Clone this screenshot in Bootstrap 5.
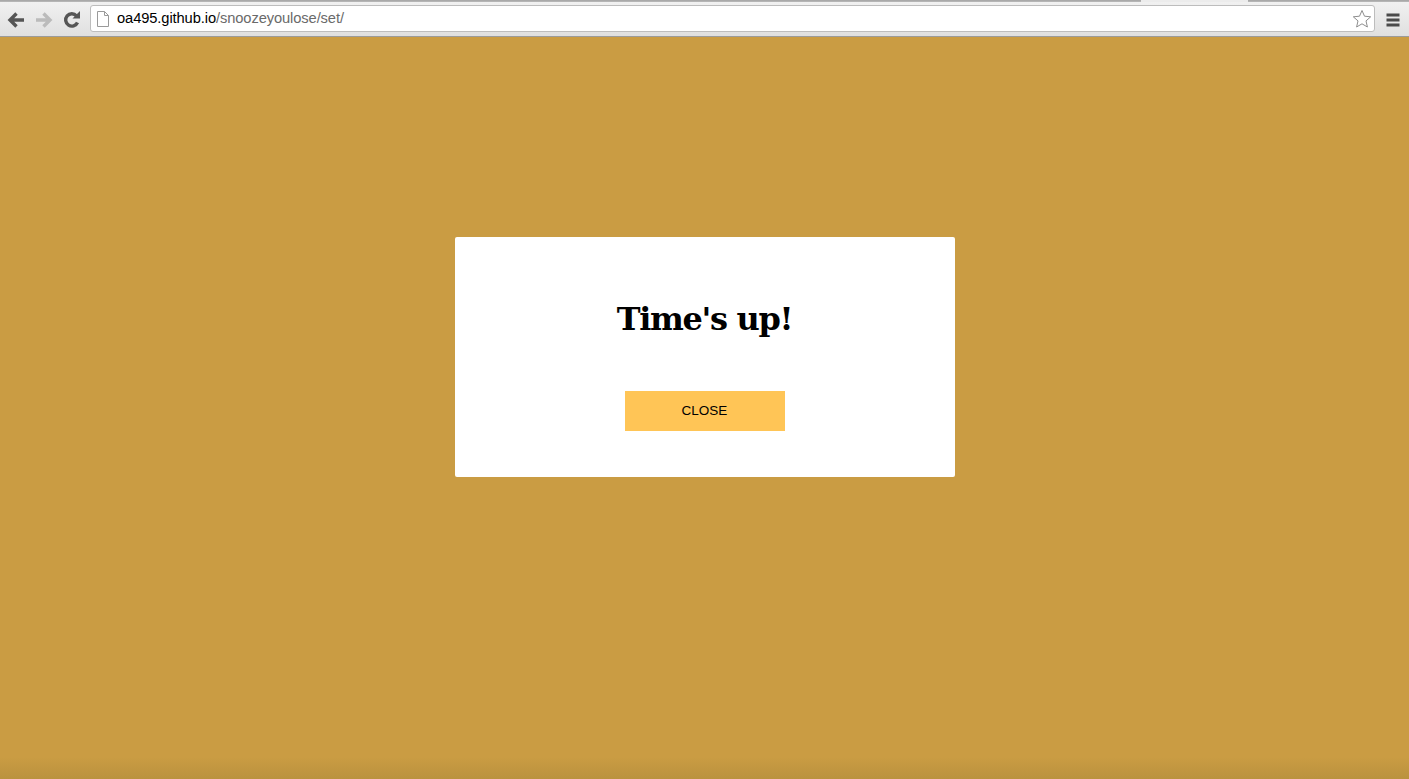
<!DOCTYPE html>
<html lang="en">
<head>
<meta charset="utf-8">
<title>Time's up!</title>
<link href="https://cdn.jsdelivr.net/npm/bootstrap@5.3.0/dist/css/bootstrap.min.css" rel="stylesheet">
<style>
html,body{height:100%;}
body{background:#ca9c43;font-family:"Liberation Sans",Arial,sans-serif;overflow:hidden;}
.tab-strip{height:2px;background:linear-gradient(#a3a3a3,#bbb);padding-left:1141px;}
.tab-piece{width:107px;height:2px;background:#ececec;}
.chrome-bar{height:35px;background:linear-gradient(#f1f1f1,#e0e0e0);border-bottom:1px solid #9b9b9b;padding:1px 6px 0;}
.tool-ico{width:20px;height:20px;flex:none;}
.addr{height:27px;margin:0 0 2px 8px;background:#fff;border:1px solid #bdbdbd;border-radius:3px;padding:0 2px 0 6px;}
.addr-text{font-size:14.7px;letter-spacing:-.1px;color:#6a6a6a;margin-left:8px;line-height:1;}
.addr-host{color:#000;}
.stage{height:742px;padding-top:200px;background:linear-gradient(#ca9c43 0,#ca9c43 720px,#ba923e 742px);}
.dialog-box{width:500px;height:240px;border-radius:2px;padding-top:60px;}
.dialog-title{font-family:"DejaVu Serif",serif;font-weight:700;font-size:32px;letter-spacing:-1.35px;line-height:44px;margin:0 0 50px;color:#000;}
.close-btn{width:160px;height:40px;background:#ffc556;border:0;border-radius:0;font-size:13.500px;color:#000;padding:1px 0 0;}
.close-btn:hover{background:#ffc556;color:#000;}
</style>
</head>
<body>
<div class="tab-strip"><div class="tab-piece"></div></div>
<div class="chrome-bar d-flex align-items-center">
  <svg class="tool-ico" viewBox="0 0 20 20"><path d="M18 10H6M10.500 3.500 4 10l6.500 6.500" fill="none" stroke="#555" stroke-width="3.400"/></svg>
  <svg class="tool-ico ms-2" viewBox="0 0 20 20"><path d="M2 10h12M9.500 3.500 16 10l-6.500 6.500" fill="none" stroke="#bbb" stroke-width="3.400"/></svg>
  <svg class="tool-ico ms-2" viewBox="0 0 20 20"><path d="M15.500 12.500A6.200 6.200 0 1 1 14.500 5.800" fill="none" stroke="#555" stroke-width="3.400"/><path d="M10.500 8.500h7.500V1z" fill="#555"/></svg>
  <div class="addr flex-grow-1 d-flex align-items-center">
    <svg width="12" height="16" viewBox="0 0 12 16"><path d="M.5.500h7l4 4v11H.5zM7.500.500v4h4" fill="#fff" stroke="#9a9a9a"/></svg>
    <span class="addr-text flex-grow-1"><span class="addr-host">oa495.github.io</span>/snoozeyoulose/set/</span>
    <svg width="20" height="20" viewBox="0 0 20 20"><path d="M10 1.500l2.500 5.700 6.200.6-4.700 4.100 1.400 6.100L10 14.800l-5.400 3.200L6 11.900 1.300 7.800l6.200-.6z" fill="#fff" stroke="#8e8e8e"/></svg>
  </div>
  <svg class="tool-ico ms-2" viewBox="0 0 20 20"><path d="M3.500 5h13M3.500 10h13M3.500 15h13" stroke="#4a4a4a" stroke-width="3"/></svg>
</div>
<main class="stage d-flex justify-content-center align-items-start">
  <div class="dialog-box bg-white text-center">
    <h1 class="dialog-title">Time's up!</h1>
    <button type="button" class="btn close-btn">CLOSE</button>
  </div>
</main>
<script src="https://cdn.jsdelivr.net/npm/bootstrap@5.3.0/dist/js/bootstrap.bundle.min.js"></script>
</body>
</html>
